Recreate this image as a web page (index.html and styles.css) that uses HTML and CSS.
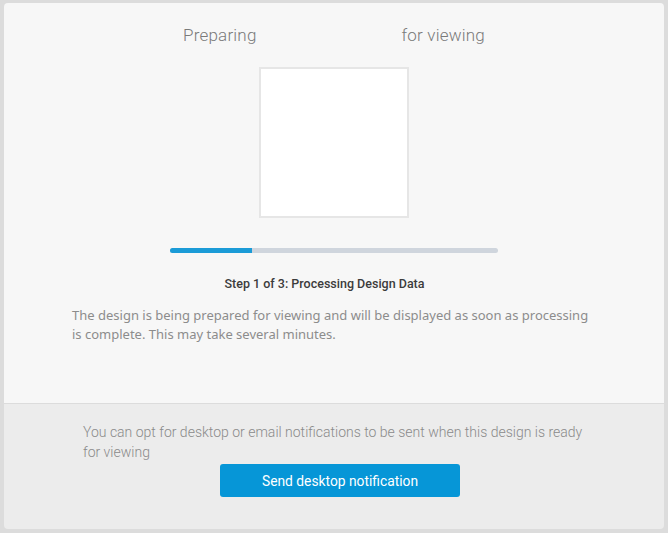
FILE: index.html
```html
<!DOCTYPE html>
<html>
<head>
<meta charset="utf-8">
<link rel="stylesheet" href="styles.css">
</head>
<body>
<div class="dialog">
  <section class="main">
    <h1 class="title"><span>Preparing</span><span class="name"></span><span>for viewing</span></h1>
    <div class="thumb"></div>
    <div class="progress"><div class="progress-fill" style="width:25%"></div></div>
    <div class="step">Step 1 of 3: Processing Design Data</div>
    <p class="desc">The design is being prepared for viewing and will be displayed as soon as processing is complete. This may take several minutes.</p>
  </section>
  <section class="notify">
    <p class="notify-text">You can opt for desktop or email notifications to be sent when this design is ready for viewing</p>
    <button class="btn">Send desktop notification</button>
  </section>
</div>
</body>
</html>
```
FILE: styles.css
```css
html, body {
  margin: 0;
  padding: 0;
}
body {
  background: #dcdcdc;
  width: 668px;
  height: 533px;
  padding: 3px 4px 0 4px;
  box-sizing: border-box;
  font-family: "Noto Sans", "Open Sans", sans-serif;
}
.dialog {
  width: 660px;
  display: flex;
  flex-direction: column;
}
.main {
  background: #f7f7f7;
  height: 400px;
  border-radius: 4px 4px 0 0;
  box-sizing: border-box;
  padding-top: 22px;
  display: flex;
  flex-direction: column;
  align-items: center;
}
.title {
  margin: 0;
  font-family: Roboto, sans-serif;
  font-weight: 300;
  font-size: 17px;
  line-height: 20px;
  color: #7a7a7a;
  display: flex;
  letter-spacing: 0.2px;
}
.name {
  width: 145px;
}
.thumb {
  margin-top: 22px;
  width: 150px;
  height: 151px;
  box-sizing: border-box;
  border: 2px solid #e6e6e6;
  background: #fff;
}
.progress {
  margin-top: 30px;
  width: 328px;
  height: 5px;
  border-radius: 3px;
  background: #cfd5dd;
  overflow: hidden;
}
.progress-fill {
  height: 100%;
  background: #1b9bd7;
}
.step {
  margin: 23px 19px 0 0;
  font-family: Roboto, sans-serif;
  font-size: 12.5px;
  font-weight: 500;
  color: #3c3c3c;
  line-height: 16px;
}
.desc {
  margin: 14px 0 0 0;
  align-self: stretch;
  padding: 0 68px;
  font-size: 13px;
  line-height: 19px;
  color: #8c8c8c;
}
.notify {
  margin-top: 1px;
  background: #ececec;
  height: 125px;
  border-radius: 0 0 4px 4px;
  box-sizing: border-box;
  padding: 18px 0 0 0;
  display: flex;
  flex-direction: column;
  align-items: center;
}
.notify-text {
  margin: 0;
  align-self: stretch;
  padding: 0 76px 0 79px;
  font-family: Roboto, sans-serif;
  font-weight: 300;
  font-size: 14px;
  line-height: 20px;
  color: #8a8a8a;
}
.btn {
  margin: 2px 0 0 12px;
  width: 240px;
  height: 33px;
  border: none;
  border-radius: 3px;
  background: #0696d7;
  color: #fff;
  font-family: Roboto, sans-serif;
  font-size: 13.8px;
  font-weight: 400;
  padding: 0;
}
```
